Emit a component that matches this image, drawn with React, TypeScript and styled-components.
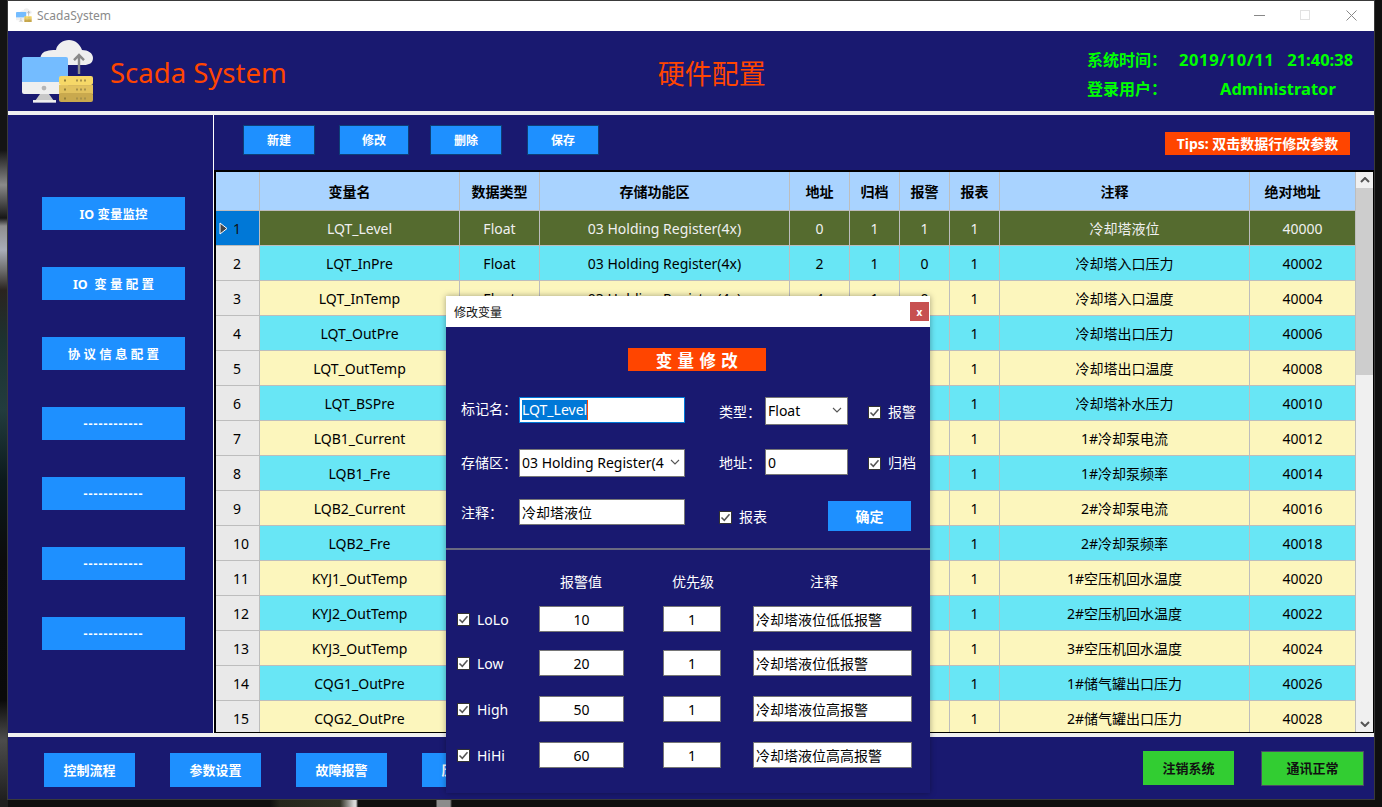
import styled, { createGlobalStyle } from 'styled-components'

const NAVY = '#191970'
const BLUE = '#1e90ff'
const ORANGE = '#ff4500'
const FONT = `"Noto Sans", "Noto Sans CJK SC", "Liberation Sans", sans-serif`

const GlobalStyle = createGlobalStyle`
  html, body {
    margin: 0;
    padding: 0;
    background: #0b0b0b;
    font-family: ${FONT};
    overflow: hidden;
  }
  * { box-sizing: border-box; }
`

const rows = [
  ['LQT_Level', '0', '1', '冷却塔液位', '40000'],
  ['LQT_InPre', '2', '0', '冷却塔入口压力', '40002'],
  ['LQT_InTemp', '4', '0', '冷却塔入口温度', '40004'],
  ['LQT_OutPre', '', '', '冷却塔出口压力', '40006'],
  ['LQT_OutTemp', '', '', '冷却塔出口温度', '40008'],
  ['LQT_BSPre', '', '', '冷却塔补水压力', '40010'],
  ['LQB1_Current', '', '', '1#冷却泵电流', '40012'],
  ['LQB1_Fre', '', '', '1#冷却泵频率', '40014'],
  ['LQB2_Current', '', '', '2#冷却泵电流', '40016'],
  ['LQB2_Fre', '', '', '2#冷却泵频率', '40018'],
  ['KYJ1_OutTemp', '', '', '1#空压机回水温度', '40020'],
  ['KYJ2_OutTemp', '', '', '2#空压机回水温度', '40022'],
  ['KYJ3_OutTemp', '', '', '3#空压机回水温度', '40024'],
  ['CQG1_OutPre', '', '', '1#储气罐出口压力', '40026'],
  ['CQG2_OutPre', '', '', '2#储气罐出口压力', '40028'],
]

const columns = [
  { title: '', width: 44 },
  { title: '变量名', width: 200, shift: true },
  { title: '数据类型', width: 80 },
  { title: '存储功能区', width: 250, shift: true },
  { title: '地址', width: 60 },
  { title: '归档', width: 50 },
  { title: '报警', width: 50 },
  { title: '报表', width: 50 },
  { title: '注释', width: 250, shift: true },
  { title: '绝对地址', width: 106, shift: true },
]

const sideItems = ['IO 变量监控', 'IO  变 量 配 置', '协 议 信 息 配 置', '------------', '------------', '------------', '------------']
const navItems = ['控制流程', '参数设置', '故障报警', '历史趋势']
const alarms = [
  { name: 'LoLo', value: '10', note: '冷却塔液位低低报警', gap: 44 },
  { name: 'Low', value: '20', note: '冷却塔液位低报警', gap: 46 },
  { name: 'High', value: '50', note: '冷却塔液位高报警', gap: 46 },
  { name: 'HiHi', value: '60', note: '冷却塔液位高高报警', gap: 26 },
]

const Logo = ({ size }: { size: number }) => (
  <svg width={size} height={size * 0.89} viewBox="0 0 72 64">
    <path d="M26 26a7 7 0 0 1-1-14c2-1 5-1 9-1 1-6 7-10 13-10s11 4 13 10c6 0 11 3 11 8s-4 7-9 7z" fill="#efefef" />
    <path d="M57 35V16M52 21l5-5 5 5" stroke="#8a8a8a" strokeWidth="2.400" fill="none" />
    <path d="M0 20a2 2 0 0 1 2-2h42a2 2 0 0 1 2 2v24H0z" fill="#74bcff" />
    <path d="M0 43h46v10a2 2 0 0 1-2 2H2a2 2 0 0 1-2-2z" fill="#efefef" />
    <circle cx="22" cy="49" r="2.400" fill="#b5b5b5" />
    <path d="M18 55h9l5 7H13z" fill="#c8c8c8" />
    <rect x="11" y="61" width="23" height="2.600" fill="#efefef" />
    <rect x="37" y="37" width="34" height="9" rx="2" fill="#f6d868" />
    <rect x="37" y="46" width="34" height="9" fill="#e2c25e" />
    <rect x="37" y="54" width="34" height="9" rx="2" fill="#c9a94e" />
    <path d="M42 41.500h2M42 50.500h2M42 59.500h2" stroke="#94803a" strokeWidth="2" />
    <path d="M54 41.500h12M54 50.500h12M54 59.500h12" stroke="#a8924a" strokeWidth="2" strokeDasharray="2 2" />
  </svg>
)

const CheckBox = ({ label }: { label: string }) => (
  <CheckLabel>
    <CheckSquare>
      <svg width="11" height="11" viewBox="0 0 11 11">
        <path d="M1.500 5.500l2.800 2.800 5.200-6" stroke="#555" strokeWidth="1.500" fill="none" />
      </svg>
    </CheckSquare>
    {label}
  </CheckLabel>
)

const Chevron = () => (
  <svg width="10" height="6" viewBox="0 0 10 6">
    <path d="M1 1l4 4 4-4" stroke="#555" strokeWidth="1.100" fill="none" />
  </svg>
)

export default function App() {
  return (
    <>
      <GlobalStyle />
      <Desktop>
        <Wallpaper />
        <Window>
          <TitleBar>
            <Logo size={16} />
            <TitleText>ScadaSystem</TitleText>
            <WindowButtons>
              <svg width="11" height="11" viewBox="0 0 11 11">
                <path d="M0 5.500h11" stroke="#888" />
              </svg>
              <svg width="11" height="11" viewBox="0 0 11 11">
                <rect x="0.500" y="0.500" width="9" height="9" fill="none" stroke="#e2e2e2" />
              </svg>
              <svg width="11" height="11" viewBox="0 0 11 11">
                <path d="M0.500 0.500l10 10M10.500 0.500l-10 10" stroke="#888" />
              </svg>
            </WindowButtons>
          </TitleBar>

          <Header>
            <Brand>
              <Logo size={72} />
              <BrandName>Scada System</BrandName>
            </Brand>
            <PageTitle>硬件配置</PageTitle>
            <Status>
              <StatusRow>
                <span>系统时间：</span>
                <StatusDate>2019/10/11</StatusDate>
                <StatusClock>21:40:38</StatusClock>
              </StatusRow>
              <StatusRow>
                <span>登录用户：</span>
                <StatusUser>Administrator</StatusUser>
              </StatusRow>
            </Status>
          </Header>

          <Middle>
            <Sidebar>
              {sideItems.map((item, i) => (
                <SideButton key={i} $dash={i > 2}>{item}</SideButton>
              ))}
            </Sidebar>
            <Content>
              <Toolbar>
                <ToolButton>新建</ToolButton>
                <ToolButton $w={70} $gap={24}>修改</ToolButton>
                <ToolButton $gap={21}>删除</ToolButton>
                <ToolButton $gap={25}>保存</ToolButton>
                <Tips>Tips: 双击数据行修改参数</Tips>
              </Toolbar>
              <GridPanel>
                <GridTable>
                  <colgroup>
                    {columns.map((c, i) => (
                      <col key={i} style={{ width: c.width }} />
                    ))}
                  </colgroup>
                  <thead>
                    <tr>
                      {columns.map((c, i) => (
                        <HeadCell key={i} $shift={c.shift}>{c.title}</HeadCell>
                      ))}
                    </tr>
                  </thead>
                  <tbody>
                    {rows.map((r, i) => {
                      // cells under the dialog stay blank from row 4 down
                      const covered = i > 2
                      return (
                        <DataRow key={i} $kind={i === 0 ? 'selected' : i % 2 ? 'cyan' : 'yellow'}>
                          <RowHead $selected={i === 0}>
                            {i === 0 && (
                              <RowMarker width="9" height="13" viewBox="0 0 9 13">
                                <path d="M1 1l7 5.500-7 5.500z" fill="#444" stroke="#fff" />
                              </RowMarker>
                            )}
                            {i + 1}
                          </RowHead>
                          <td>{r[0]}</td>
                          <td>{covered ? '' : 'Float'}</td>
                          <td>{covered ? '' : '03 Holding Register(4x)'}</td>
                          <td>{r[1]}</td>
                          <td>{covered ? '' : '1'}</td>
                          <td>{r[2]}</td>
                          <td>1</td>
                          <td>{r[3]}</td>
                          <td>{r[4]}</td>
                        </DataRow>
                      )
                    })}
                  </tbody>
                </GridTable>
                <ScrollBar>
                  <ScrollArrow>
                    <svg width="10" height="6" viewBox="0 0 10 6">
                      <path d="M1 5l4-4 4 4" stroke="#555" strokeWidth="2" fill="none" />
                    </svg>
                  </ScrollArrow>
                  <ScrollThumb />
                  <ScrollTrack />
                  <ScrollArrow>
                    <svg width="10" height="6" viewBox="0 0 10 6">
                      <path d="M1 1l4 4 4-4" stroke="#555" strokeWidth="2" fill="none" />
                    </svg>
                  </ScrollArrow>
                </ScrollBar>
              </GridPanel>
            </Content>
          </Middle>

          <BottomBar>
            <NavGroup>
              {navItems.map(item => (
                <NavButton key={item}>{item}</NavButton>
              ))}
            </NavGroup>
            <GreenButton>注销系统</GreenButton>
            <GreenStatus>通讯正常</GreenStatus>
          </BottomBar>
        </Window>

        <Dialog>
          <DialogTitle>
            修改变量
            <CloseButton>x</CloseButton>
          </DialogTitle>
          <FormPart>
            <Banner>变 量 修 改</Banner>
            <FormRow $gap={24}>
              <FieldLabel $top={2}>标记名：</FieldLabel>
              <FocusField>
                <Selected>LQT_Level</Selected>
              </FocusField>
              <SecondLabel $top={5}>类型：</SecondLabel>
              <ComboSmall>
                Float
                <Chevron />
              </ComboSmall>
              <CheckSlot $top={5}>
                <CheckBox label="报警" />
              </CheckSlot>
            </FormRow>
            <FormRow $gap={22}>
              <FieldLabel $top={4}>存储区：</FieldLabel>
              <ComboWide>
                <ClipText>03 Holding Register(4</ClipText>
                <Chevron />
              </ComboWide>
              <SecondLabel $top={4}>地址：</SecondLabel>
              <SmallField>0</SmallField>
              <CheckSlot $top={4}>
                <CheckBox label="归档" />
              </CheckSlot>
            </FormRow>
            <FormRow $gap={0}>
              <FieldLabel $top={4}>注释：</FieldLabel>
              <WideField>冷却塔液位</WideField>
              <ReportSlot>
                <CheckBox label="报表" />
              </ReportSlot>
              <ConfirmButton>确定</ConfirmButton>
            </FormRow>
          </FormPart>
          <Divider />
          <AlarmPart>
            <AlarmHead>
              <HeadValue>报警值</HeadValue>
              <HeadPriority>优先级</HeadPriority>
              <HeadNote>注释</HeadNote>
            </AlarmHead>
            {alarms.map(a => (
              <AlarmRow key={a.name} $gap={a.gap}>
                <AlarmName>
                  <CheckBox label={a.name} />
                </AlarmName>
                <ValueField>{a.value}</ValueField>
                <PriorityField>1</PriorityField>
                <NoteField>{a.note}</NoteField>
              </AlarmRow>
            ))}
          </AlarmPart>
        </Dialog>
      </Desktop>
    </>
  )
}

const Desktop = styled.div`
  position: relative;
  width: 1382px;
  height: 807px;
  padding: 1px 8px 8px;
  overflow: hidden;
`

const Wallpaper = styled.div`
  position: absolute;
  inset: 0;
  background:
    linear-gradient(
        to bottom,
        #141414 150px,
        #8a8a8a 185px,
        #161616 218px,
        #8e8e8e 226px,
        #a9adb8 250px,
        #6e6e6e 270px,
        #2a2420 290px,
        #1d3230 340px,
        #223c3e 410px,
        #0c1a1c 480px,
        #0c0c0c 560px,
        #0a0a0a 700px,
        #4c4c4c 740px,
        #1f1f1f 800px
      )
      left / 8px 100% no-repeat,
    linear-gradient(
        to right,
        transparent 270px,
        #25261c 280px,
        #2c2e22 340px,
        #d8d8d8 354px,
        #d8d8d8 356px,
        transparent 358px,
        transparent 436px,
        #8c8c8c 437px,
        #8c8c8c 450px,
        transparent 452px
      )
      bottom / 100% 8px no-repeat,
    #0f0f0f;
`

const Window = styled.div`
  position: relative;
  display: flex;
  flex-direction: column;
  width: 1366px;
  height: 798px;
  background: ${NAVY};
  box-shadow: 0 0 0 1px #3a3a3a;
`

const TitleBar = styled.div`
  display: flex;
  align-items: center;
  height: 30px;
  padding: 0 17px 2px 8px;
  background: #fff;
`

const TitleText = styled.span`
  margin-left: 5px;
  font-size: 12px;
  color: #8a8a8a;
`

const WindowButtons = styled.div`
  display: flex;
  gap: 35px;
  margin-left: auto;
`

const Header = styled.header`
  display: flex;
  align-items: center;
  height: 80px;
  padding: 0 18px 0 14px;
`

const Brand = styled.div`
  display: flex;
  align-items: center;
  gap: 16px;
`

const BrandName = styled.span`
  margin-top: 3px;
  font-size: 27.5px;
  color: ${ORANGE};
  line-height: 1;
`

const PageTitle = styled.h1`
  margin: 2px 0 0 371px;
  font-size: 27px;
  font-weight: 400;
  color: ${ORANGE};
`

const Status = styled.div`
  display: flex;
  flex-direction: column;
  gap: 7px;
  margin-left: auto;
  padding-top: 7px;
  width: 269px;
  color: #00ff00;
  font-weight: 700;
  font-size: 16px;
`

const StatusRow = styled.div`
  display: flex;
  line-height: 22px;
  white-space: nowrap;
`

const StatusDate = styled.span`
  margin-left: 12px;
  font-size: 16.5px;
  letter-spacing: 0.6px;
`

const StatusClock = styled.span`
  margin-left: 13px;
  font-size: 16.5px;
`

const StatusUser = styled.span`
  margin-left: 53px;
  font-size: 16.5px;
`

const Middle = styled.div`
  display: flex;
  height: 626px;
  border-top: 4px solid #f0f0f0;
  border-bottom: 4px solid #f0f0f0;
`

const Sidebar = styled.nav`
  display: flex;
  flex-direction: column;
  gap: 37px;
  width: 206px;
  padding: 82px 0 0 34px;
  border-right: 1px solid #fff;
`

const SideButton = styled.div<{ $dash: boolean }>`
  display: flex;
  align-items: center;
  justify-content: center;
  width: 143px;
  height: 33px;
  background: ${BLUE};
  color: #fff;
  font-size: 12.5px;
  font-weight: 700;
  white-space: pre;
  letter-spacing: ${p => (p.$dash ? '1px' : '0')};
`

const Content = styled.main`
  display: flex;
  flex-direction: column;
  flex: 1;
  min-width: 0;
`

const Toolbar = styled.div`
  display: flex;
  align-items: flex-start;
  height: 55px;
  padding: 10px 24px 0 29px;
`

const ToolButton = styled.div<{ $w?: number; $gap?: number }>`
  display: flex;
  align-items: center;
  justify-content: center;
  width: ${p => p.$w ?? 72}px;
  height: 30px;
  margin-left: ${p => p.$gap ?? 0}px;
  background: ${BLUE};
  border: 1px solid #0d3f78;
  color: #fff;
  font-size: 12px;
  font-weight: 700;
`

const Tips = styled.div`
  display: flex;
  align-items: center;
  justify-content: center;
  width: 185px;
  height: 23px;
  margin: 7px 0 0 auto;
  padding-bottom: 1px;
  background: ${ORANGE};
  color: #fff;
  font-size: 14px;
  font-weight: 700;
  white-space: nowrap;
`

const GridPanel = styled.div`
  display: flex;
  flex: 1;
  min-height: 0;
  overflow: hidden;
  background: #fff;
  border: 1px solid #000;
  border-width: 2px 1px 1px 2px;
`

const GridTable = styled.table`
  width: 1140px;
  height: fit-content;
  flex: none;
  table-layout: fixed;
  border-collapse: separate;
  border-spacing: 0;
  font-size: 14px;

  td {
    height: 35px;
    padding: 0;
    text-align: center;
    border-right: 1px solid #bdbdbd;
    border-bottom: 1px solid #bdbdbd;
    white-space: nowrap;
    overflow: hidden;
  }
`

const HeadCell = styled.th<{ $shift?: boolean }>`
  height: 39px;
  padding: 0 ${p => (p.$shift ? 20 : 0)}px 0 0;
  background: #a9d3ff;
  color: #000;
  font-size: 14px;
  font-weight: 700;
  border-right: 1px solid #bdbdbd;
  border-bottom: 1px solid #bdbdbd;
`

const rowColors = {
  selected: { bg: '#556b2f', fg: '#f0f0f0' },
  cyan: { bg: '#68e6f5', fg: '#000' },
  yellow: { bg: '#fcf6bd', fg: '#000' },
}

const DataRow = styled.tr<{ $kind: keyof typeof rowColors }>`
  background: ${p => rowColors[p.$kind].bg};
  color: ${p => rowColors[p.$kind].fg};
`

const RowHead = styled.td<{ $selected: boolean }>`
  position: relative;
  && {
    padding-left: 17px;
    text-align: left;
    background: ${p => (p.$selected ? '#0078d7' : '#e9e9e9')};
    color: ${p => (p.$selected ? '#111' : '#000')};
  }
`

const RowMarker = styled.svg`
  position: absolute;
  left: 3px;
  top: 11px;
`

const ScrollBar = styled.div`
  display: flex;
  flex-direction: column;
  flex: 1;
  background: #f0f0f0;
`

const ScrollArrow = styled.div`
  display: flex;
  align-items: center;
  justify-content: center;
  height: 16px;
`

const ScrollThumb = styled.div`
  height: 187px;
  background: #cdcdcd;
`

const ScrollTrack = styled.div`
  flex: 1;
`

const BottomBar = styled.footer`
  display: flex;
  align-items: flex-start;
  flex: 1;
  padding: 14px 10px 0 36px;
`

const NavGroup = styled.div`
  display: flex;
  gap: 35px;
  margin: 2px auto 0 0;
`

const NavButton = styled.div`
  display: flex;
  align-items: center;
  justify-content: center;
  width: 91px;
  height: 34px;
  padding-bottom: 2px;
  background: ${BLUE};
  color: #fff;
  font-size: 13px;
  font-weight: 700;
`

const GreenButton = styled.div`
  display: flex;
  align-items: center;
  justify-content: center;
  width: 91px;
  height: 34px;
  padding-bottom: 2px;
  background: #32cd32;
  color: #111;
  font-size: 13px;
  font-weight: 700;
`

const GreenStatus = styled(GreenButton)`
  width: 103px;
  height: 35px;
  margin-left: 27px;
  border: 1px solid #4a4a6a;
`

const Dialog = styled.section`
  position: absolute;
  left: 446px;
  top: 296px;
  display: flex;
  flex-direction: column;
  width: 484px;
  height: 497px;
  background: ${NAVY};
  box-shadow: 0 0 6px rgba(0, 0, 0, 0.35);
`

const DialogTitle = styled.div`
  display: flex;
  align-items: center;
  justify-content: space-between;
  height: 31px;
  padding: 0 1px 0 8px;
  background: #fff;
  font-size: 12px;
  color: #111;
`

const CloseButton = styled.span`
  display: flex;
  align-items: center;
  justify-content: center;
  width: 19px;
  height: 19px;
  background: #c75050;
  color: #fff;
  font-size: 10px;
  font-weight: 700;
`

const FormPart = styled.div`
  display: flex;
  flex-direction: column;
  height: 221px;
  padding: 21px 0 0 15px;
`

const Banner = styled.div`
  display: flex;
  align-items: center;
  justify-content: center;
  width: 138px;
  height: 23px;
  margin: 0 0 26px 167px;
  background: ${ORANGE};
  color: #fff;
  font-size: 16.5px;
  font-weight: 700;
  letter-spacing: 0.5px;
`

const FormRow = styled.div<{ $gap: number }>`
  display: flex;
  align-items: flex-start;
  min-height: 26px;
  margin-bottom: ${p => p.$gap}px;
  color: #fff;
  font-size: 14px;
`

const FieldLabel = styled.span<{ $top: number }>`
  width: 58px;
  margin-top: ${p => p.$top}px;
  line-height: 20px;
  white-space: nowrap;
`

const SecondLabel = styled.span<{ $top: number }>`
  width: 46px;
  margin: ${p => p.$top}px 0 0 34px;
  line-height: 20px;
`

const Box = styled.div`
  display: flex;
  align-items: center;
  height: 26px;
  padding: 0 2px;
  background: #fff;
  border: 1px solid #767676;
  color: #000;
  font-size: 14px;
  white-space: nowrap;
`

const WideField = styled(Box)`
  width: 166px;
`

const FocusField = styled(WideField)`
  border-color: #0078d7;
`

const Selected = styled.span`
  background: #0078d7;
  color: #fff;
  line-height: 20px;
  border-right: 1px solid ${ORANGE};
`

const SmallField = styled(Box)`
  width: 83px;
`

const ComboSmall = styled(SmallField)`
  justify-content: space-between;
  height: 28px;
  padding: 0 5px 2px 2px;
`

const ComboWide = styled(WideField)`
  justify-content: space-between;
  height: 28px;
  padding: 0 4px 2px 2px;
`

const ClipText = styled.span`
  width: 143px;
  overflow: hidden;
`

const CheckSlot = styled.div<{ $top: number }>`
  margin: ${p => p.$top}px 0 0 20px;
`

const ReportSlot = styled.div`
  width: 109px;
  margin: 8px 0 0 34px;
`

const ConfirmButton = styled.div`
  display: flex;
  align-items: center;
  justify-content: center;
  width: 83px;
  height: 30px;
  margin-top: 2px;
  background: ${BLUE};
  color: #fff;
  font-size: 14px;
  font-weight: 700;
`

const CheckLabel = styled.label`
  display: inline-flex;
  align-items: center;
  gap: 7px;
  color: #fff;
  font-size: 14px;
  line-height: 20px;
`

const CheckSquare = styled.span`
  display: flex;
  align-items: center;
  justify-content: center;
  width: 13px;
  height: 13px;
  background: #fff;
  border: 1px solid #333;
`

const Divider = styled.div`
  height: 2px;
  background: #6a6a80;
`

const AlarmPart = styled.div`
  display: flex;
  flex-direction: column;
  padding: 22px 0 0 11px;
`

const AlarmHead = styled.div`
  display: flex;
  height: 20px;
  margin-bottom: 14px;
  color: #fff;
  font-size: 14px;
  line-height: 20px;
`

const HeadValue = styled.span`
  margin-left: 103px;
`

const HeadPriority = styled.span`
  margin-left: 70px;
`

const HeadNote = styled.span`
  margin-left: 96px;
`

const AlarmRow = styled.div<{ $gap: number }>`
  display: flex;
  align-items: center;
  height: 26px;
  margin-bottom: ${p => p.$gap - 26}px;
`

const AlarmName = styled.div`
  width: 82px;
`

const ValueField = styled(Box)`
  justify-content: center;
  width: 85px;
`

const PriorityField = styled(Box)`
  justify-content: center;
  width: 58px;
  margin-left: 39px;
`

const NoteField = styled(Box)`
  width: 159px;
  margin-left: 32px;
`
